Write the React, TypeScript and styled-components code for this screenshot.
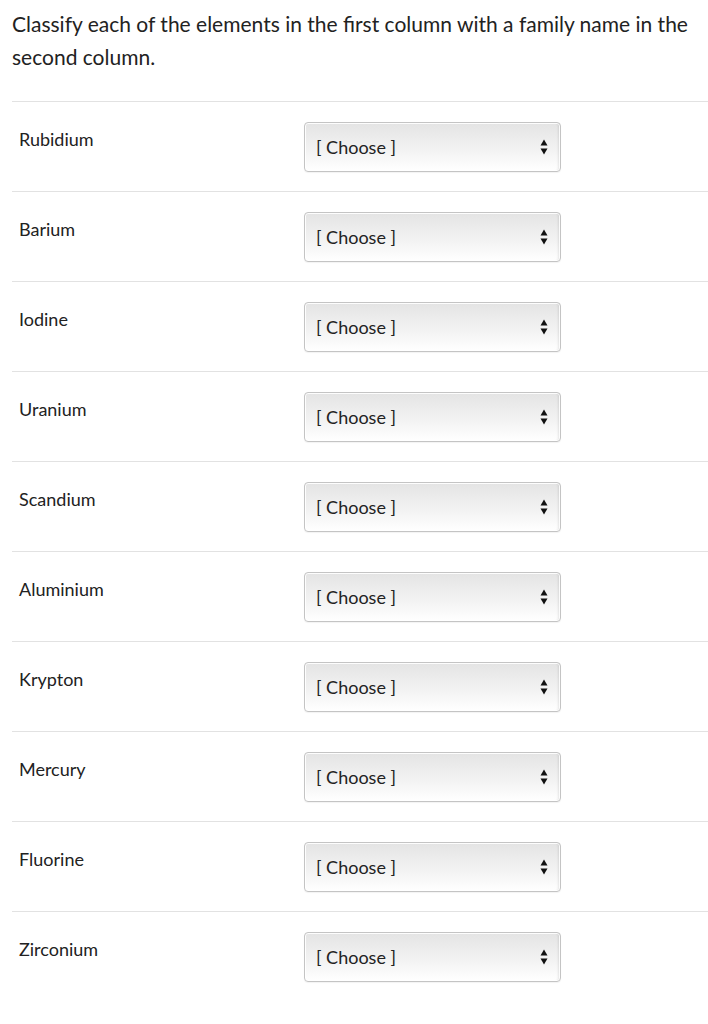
import * as React from 'react';
import styled, { createGlobalStyle } from 'styled-components';

const GlobalStyle = createGlobalStyle`
    body {
        margin: 0;
        background: #fff;
        font-family: Lato, "Liberation Sans", sans-serif;
        color: #2d3b45;
    }
`;

const Page = styled.div`
    padding: 7px 0 0 12px;
    overflow: hidden;
`;

const Prompt = styled.p`
    margin: 0 0 28px 0;
    font-size: 21px;
    line-height: 33px;
    color: #222;
`;

const Row = styled.div`
    display: grid;
    grid-template-columns: 292px 257px;
    align-items: start;
    height: 89px;
    border-top: 1px solid #e2e2e2;
    width: 720px;
`;

const Label = styled.div`
    padding: 25px 0 0 7px;
    font-size: 18px;
    line-height: 24px;
    color: #222;
`;

const Select = styled.div`
    box-sizing: border-box;
    margin-top: 20px;
    height: 50px;
    display: flex;
    align-items: center;
    justify-content: space-between;
    padding: 0 12px 0 11px;
    border: 1px solid #c4c4c4;
    border-radius: 4px;
    background: linear-gradient(to bottom, #e4e4e4 0%, #f2f2f2 55%, #ffffff 100%);
    box-shadow:
        inset 0 0 0 1px rgba(255, 255, 255, 0.9),
        inset -3px 0 3px -2px rgba(0, 0, 0, 0.18),
        0 1px 1px rgba(0, 0, 0, 0.05);
    font-size: 18px;
    color: #222;
    cursor: pointer;
`;

const Arrows = () => (
    <svg width="8" height="16" viewBox="0 0 8 16">
        <path d="M4 0.5 L7.5 6.5 L0.5 6.5 Z" fill="#111" />
        <path d="M4 15.5 L7.5 9.5 L0.5 9.5 Z" fill="#111" />
    </svg>
);

const elements = [
    'Rubidium',
    'Barium',
    'Iodine',
    'Uranium',
    'Scandium',
    'Aluminium',
    'Krypton',
    'Mercury',
    'Fluorine',
    'Zirconium',
];

const App: React.FC = () => (
    <Page>
        <GlobalStyle />
        <Prompt>
            Classify each of the elements in the first column with a family name in the second column.
        </Prompt>
        { elements.map((name) => (
            <Row key={ name }>
                <Label>{ name }</Label>
                <Select>
                    <span>[ Choose ]</span>
                    <Arrows />
                </Select>
            </Row>
        )) }
    </Page>
);

export default App;
